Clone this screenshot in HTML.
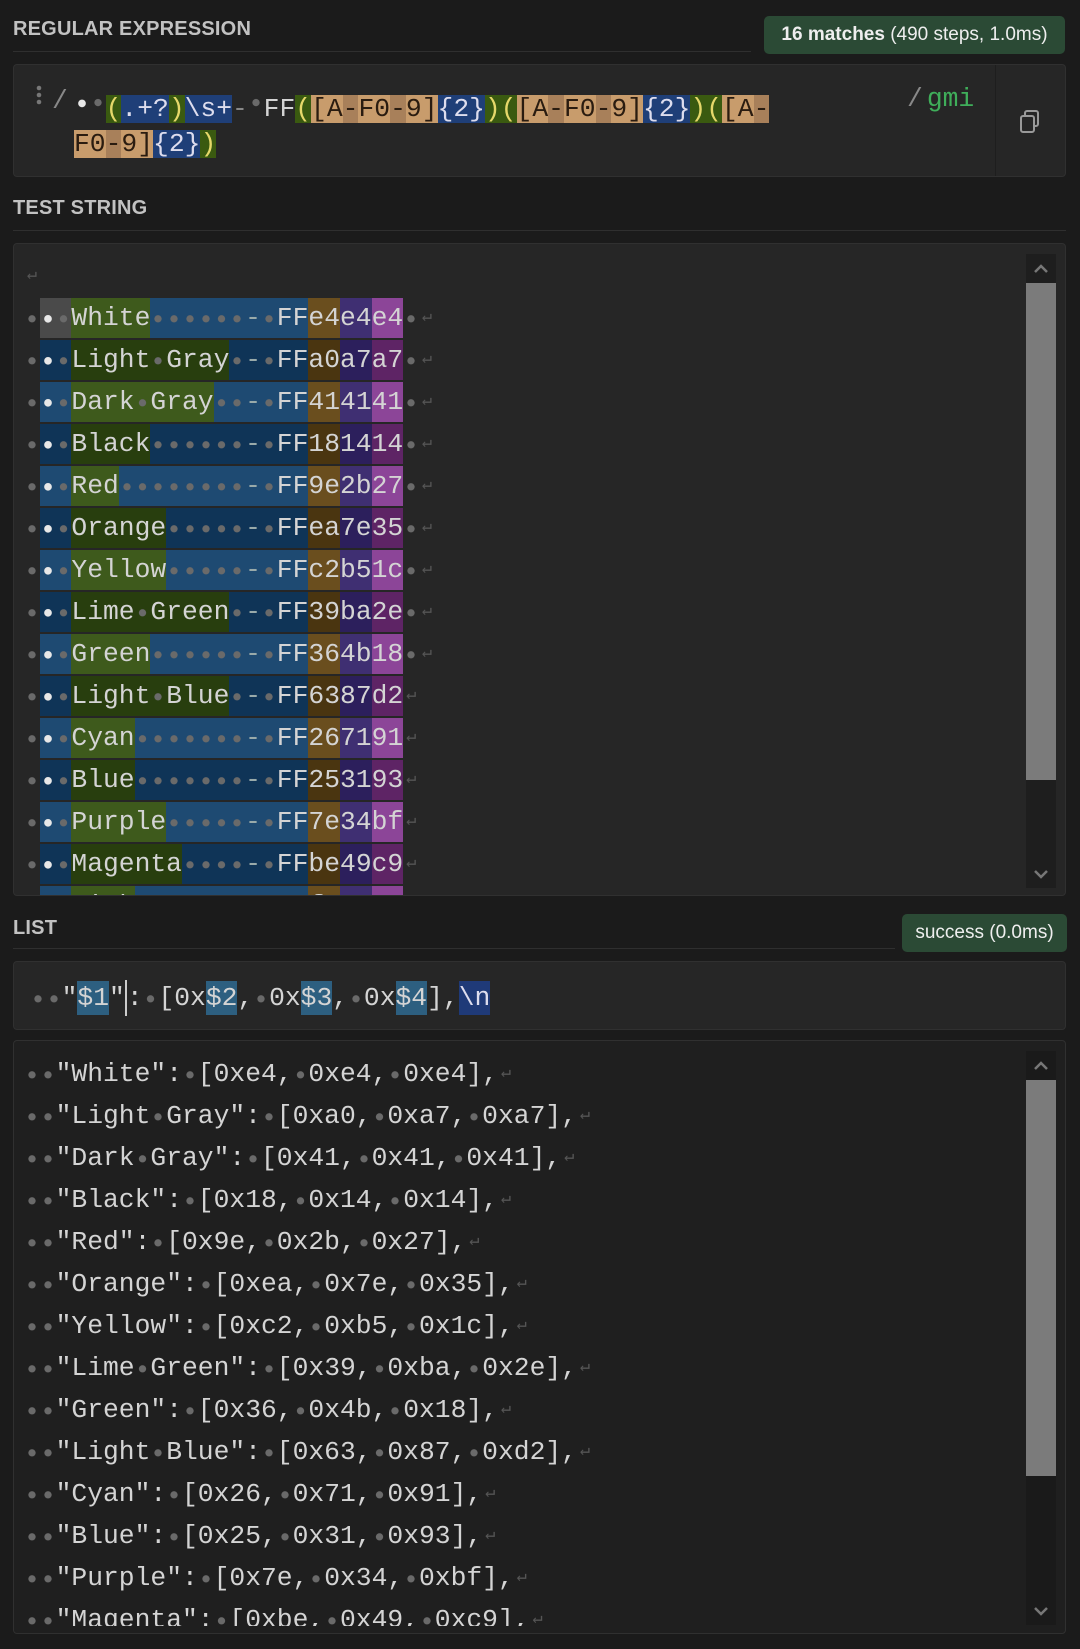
<!DOCTYPE html>
<html><head><meta charset="utf-8"><style>
*{margin:0;padding:0;box-sizing:border-box}
body{width:1080px;height:1649px;background:#1b1b1b;overflow:hidden;position:relative;font-family:"Liberation Sans",sans-serif;color:#d4d4d4}
.hdr{position:absolute;left:13px;font-size:20px;font-weight:bold;color:#c2c2c2;letter-spacing:0.2px}
.line{position:absolute;height:1px;background:#2f2f2f}
.badge{position:absolute;background:#2b4a35;border-radius:5px;color:#eee;font-size:19px;display:flex;align-items:center;justify-content:center}
.box{position:absolute;left:13px;width:1053px;background:#262626;border:1px solid #303030;border-radius:4px;overflow:hidden}
.mono{font-family:"Liberation Mono",monospace;font-size:26.33px}
.r{position:absolute;left:0;height:42px;white-space:nowrap;line-height:40px}
.r>*,.r span>*{display:inline-block;vertical-align:top;height:40px;margin-top:1px}
.r span>*{margin-top:0}
.d{width:15.8px;background:radial-gradient(circle at 50% 52%,#6a6a6a 3.3px,transparent 3.9px)}
.w{width:15.8px;background:radial-gradient(circle at 50% 52%,#e8e8e8 3.5px,transparent 4.1px)}
.n{width:15.8px;color:#555;font-style:normal;font-size:17px;text-align:center}
i{font-style:normal}
.L .m{background:#1e4a72}.D .m{background:#0f3457}
.L .g1{background:#3e5a1c}.D .g1{background:#283e0e}
.L .g2{background:#6a4e1e}.D .g2{background:#4a3510}
.L .g3{background:#3f2f72}.D .g3{background:#2c1f5c}
.L .g4{background:#8c4598}.D .g4{background:#5e2465}
.sel{background:#4a4a4a!important}
.m .h{color:#9aa}
.sb{position:absolute;right:9px;width:30px;background:#1e1e1e}
.sb .up,.sb .dn{position:absolute;left:0;width:30px;height:29px;display:flex;align-items:center;justify-content:center}
.sb .th{position:absolute;left:0;width:30px;background:#7b7b7b}
.rx{position:absolute;white-space:nowrap;line-height:28px;height:28px}
.rx span{display:inline-block;height:28px}
.p{background:#3a5a10;color:#e6d86a}
.b{background:#1f3f78;color:#dde}
.t{background:#c89c6c;color:#2a1c10}
.t2{background:#a8805a;color:#2a1c10}
.rr{position:absolute;left:10px;white-space:nowrap;height:42px;line-height:42px}
.rr>*{display:inline-block;vertical-align:top;height:42px}
</style></head><body>

<div class="hdr" style="top:18px">REGULAR EXPRESSION</div>
<div class="line" style="top:51px;left:13px;width:738px"></div>
<div class="badge" style="left:764px;top:16px;width:301px;height:38px"><span style="font-weight:bold">16 matches</span>&nbsp;(490 steps, 1.0ms)</div>

<div class="box" style="top:64px;height:113px">
  <div style="position:absolute;left:981px;top:0;width:1px;height:113px;background:#1e1e1e"></div>
  <svg style="position:absolute;left:20px;top:20px" width="10" height="22"><circle cx="5" cy="3" r="2.3" fill="#777"/><circle cx="5" cy="10" r="2.3" fill="#777"/><circle cx="5" cy="17" r="2.3" fill="#777"/></svg>
  <div class="mono rx" style="left:38px;top:22px;color:#888">/</div>
  <div class="mono rx" style="left:60px;top:23px"><span class="w" style="width:15.8px;height:28px;background:radial-gradient(circle at 50% 55%,#e8e8e8 3.5px,transparent 4.1px)"></span><span class="d" style="height:28px"></span><span class="p">(</span><span class="b">.+?</span><span class="p">)</span><span class="b">\s+</span><span style="color:#888">-</span><span class="d" style="height:28px"></span><span>FF</span><span class="p">(</span><span class="t">[A</span><span class="t2">-</span><span class="t">F0</span><span class="t2">-</span><span class="t">9]</span><span class="b">{2}</span><span class="p">)(</span><span class="t">[A</span><span class="t2">-</span><span class="t">F0</span><span class="t2">-</span><span class="t">9]</span><span class="b">{2}</span><span class="p">)(</span><span class="t">[A</span><span class="t2">-</span></div>
  <div class="mono rx" style="left:60px;top:65px"><span class="t">F0</span><span class="t2">-</span><span class="t">9]</span><span class="b">{2}</span><span class="p">)</span></div>
  <div class="mono rx" style="left:893px;top:20px"><span style="color:#888">/</span><span style="color:#3fae5a;margin-left:4px">gmi</span></div>
  <svg style="position:absolute;left:1004px;top:44px" width="24" height="26" viewBox="0 0 24 26"><rect x="7" y="2" width="13" height="15" rx="2" fill="none" stroke="#999" stroke-width="2"/><rect x="3" y="7" width="13" height="16" rx="2" fill="#262626" stroke="#999" stroke-width="2"/></svg>
</div>

<div class="hdr" style="top:197px">TEST STRING</div>
<div class="line" style="top:230px;left:13px;width:1053px"></div>

<div class="box mono" style="top:243px;height:653px">
  <div class="sb" style="top:10px;height:634px">
    <div class="up" style="top:0"><svg width="16" height="10"><path d="M2 8 L8 2 L14 8" fill="none" stroke="#777" stroke-width="2.5"/></svg></div>
    <div class="th" style="top:29px;height:497px"></div>
    <div class="dn" style="bottom:0"><svg width="16" height="10"><path d="M2 2 L8 8 L14 2" fill="none" stroke="#777" stroke-width="2.5"/></svg></div>
  </div>
  <div style="position:absolute;left:10px;top:0;width:1000px;height:649px">
    <div class="r" style="top:11px"><i class="n">↵</i></div>
    <div class="r L" style="top:53px"><i class="d"></i><span class="m sel"><i class="w"></i><i class="d"></i></span><span class="g1">White</span><span class="m"><i class="d"></i><i class="d"></i><i class="d"></i><i class="d"></i><i class="d"></i><i class="d"></i><i class="h">-</i><i class="d"></i>FF</span><span class="g2">e4</span><span class="g3">e4</span><span class="g4">e4</span><i class="d"></i><i class="n">↵</i></div>
    <div class="r D" style="top:95px"><i class="d"></i><span class="m"><i class="w"></i><i class="d"></i></span><span class="g1">Light<i class="d"></i>Gray</span><span class="m"><i class="d"></i><i class="h">-</i><i class="d"></i>FF</span><span class="g2">a0</span><span class="g3">a7</span><span class="g4">a7</span><i class="d"></i><i class="n">↵</i></div>
    <div class="r L" style="top:137px"><i class="d"></i><span class="m"><i class="w"></i><i class="d"></i></span><span class="g1">Dark<i class="d"></i>Gray</span><span class="m"><i class="d"></i><i class="d"></i><i class="h">-</i><i class="d"></i>FF</span><span class="g2">41</span><span class="g3">41</span><span class="g4">41</span><i class="d"></i><i class="n">↵</i></div>
    <div class="r D" style="top:179px"><i class="d"></i><span class="m"><i class="w"></i><i class="d"></i></span><span class="g1">Black</span><span class="m"><i class="d"></i><i class="d"></i><i class="d"></i><i class="d"></i><i class="d"></i><i class="d"></i><i class="h">-</i><i class="d"></i>FF</span><span class="g2">18</span><span class="g3">14</span><span class="g4">14</span><i class="d"></i><i class="n">↵</i></div>
    <div class="r L" style="top:221px"><i class="d"></i><span class="m"><i class="w"></i><i class="d"></i></span><span class="g1">Red</span><span class="m"><i class="d"></i><i class="d"></i><i class="d"></i><i class="d"></i><i class="d"></i><i class="d"></i><i class="d"></i><i class="d"></i><i class="h">-</i><i class="d"></i>FF</span><span class="g2">9e</span><span class="g3">2b</span><span class="g4">27</span><i class="d"></i><i class="n">↵</i></div>
    <div class="r D" style="top:263px"><i class="d"></i><span class="m"><i class="w"></i><i class="d"></i></span><span class="g1">Orange</span><span class="m"><i class="d"></i><i class="d"></i><i class="d"></i><i class="d"></i><i class="d"></i><i class="h">-</i><i class="d"></i>FF</span><span class="g2">ea</span><span class="g3">7e</span><span class="g4">35</span><i class="d"></i><i class="n">↵</i></div>
    <div class="r L" style="top:305px"><i class="d"></i><span class="m"><i class="w"></i><i class="d"></i></span><span class="g1">Yellow</span><span class="m"><i class="d"></i><i class="d"></i><i class="d"></i><i class="d"></i><i class="d"></i><i class="h">-</i><i class="d"></i>FF</span><span class="g2">c2</span><span class="g3">b5</span><span class="g4">1c</span><i class="d"></i><i class="n">↵</i></div>
    <div class="r D" style="top:347px"><i class="d"></i><span class="m"><i class="w"></i><i class="d"></i></span><span class="g1">Lime<i class="d"></i>Green</span><span class="m"><i class="d"></i><i class="h">-</i><i class="d"></i>FF</span><span class="g2">39</span><span class="g3">ba</span><span class="g4">2e</span><i class="d"></i><i class="n">↵</i></div>
    <div class="r L" style="top:389px"><i class="d"></i><span class="m"><i class="w"></i><i class="d"></i></span><span class="g1">Green</span><span class="m"><i class="d"></i><i class="d"></i><i class="d"></i><i class="d"></i><i class="d"></i><i class="d"></i><i class="h">-</i><i class="d"></i>FF</span><span class="g2">36</span><span class="g3">4b</span><span class="g4">18</span><i class="d"></i><i class="n">↵</i></div>
    <div class="r D" style="top:431px"><i class="d"></i><span class="m"><i class="w"></i><i class="d"></i></span><span class="g1">Light<i class="d"></i>Blue</span><span class="m"><i class="d"></i><i class="h">-</i><i class="d"></i>FF</span><span class="g2">63</span><span class="g3">87</span><span class="g4">d2</span><i class="n">↵</i></div>
    <div class="r L" style="top:473px"><i class="d"></i><span class="m"><i class="w"></i><i class="d"></i></span><span class="g1">Cyan</span><span class="m"><i class="d"></i><i class="d"></i><i class="d"></i><i class="d"></i><i class="d"></i><i class="d"></i><i class="d"></i><i class="h">-</i><i class="d"></i>FF</span><span class="g2">26</span><span class="g3">71</span><span class="g4">91</span><i class="n">↵</i></div>
    <div class="r D" style="top:515px"><i class="d"></i><span class="m"><i class="w"></i><i class="d"></i></span><span class="g1">Blue</span><span class="m"><i class="d"></i><i class="d"></i><i class="d"></i><i class="d"></i><i class="d"></i><i class="d"></i><i class="d"></i><i class="h">-</i><i class="d"></i>FF</span><span class="g2">25</span><span class="g3">31</span><span class="g4">93</span><i class="n">↵</i></div>
    <div class="r L" style="top:557px"><i class="d"></i><span class="m"><i class="w"></i><i class="d"></i></span><span class="g1">Purple</span><span class="m"><i class="d"></i><i class="d"></i><i class="d"></i><i class="d"></i><i class="d"></i><i class="h">-</i><i class="d"></i>FF</span><span class="g2">7e</span><span class="g3">34</span><span class="g4">bf</span><i class="n">↵</i></div>
    <div class="r D" style="top:599px"><i class="d"></i><span class="m"><i class="w"></i><i class="d"></i></span><span class="g1">Magenta</span><span class="m"><i class="d"></i><i class="d"></i><i class="d"></i><i class="d"></i><i class="h">-</i><i class="d"></i>FF</span><span class="g2">be</span><span class="g3">49</span><span class="g4">c9</span><i class="n">↵</i></div>
    <div class="r L" style="top:641px"><i class="d"></i><span class="m"><i class="w"></i><i class="d"></i></span><span class="g1">Pink</span><span class="m"><i class="d"></i><i class="d"></i><i class="d"></i><i class="d"></i><i class="d"></i><i class="d"></i><i class="d"></i><i class="h">-</i><i class="d"></i>FF</span><span class="g2">f0</span><span class="g3">8a</span><span class="g4">c0</span><i class="n">↵</i></div>
  </div>
</div>

<div class="hdr" style="top:917px">LIST</div>
<div class="line" style="top:948px;left:13px;width:882px"></div>
<div class="badge" style="left:902px;top:914px;width:165px;height:38px">success (0.0ms)</div>

<div class="box mono" style="top:961px;height:69px">
  <div class="rr" style="top:15px;left:16px"><i class="d"></i><i class="d"></i>"<span style="background:#2d5f80;height:34px;margin-top:4px;line-height:34px">$1</span>"<span style="width:2px;background:#ccc;height:36px;margin-top:3px"></span>:<i class="d"></i>[0x<span style="background:#2d5f80;height:34px;margin-top:4px;line-height:34px">$2</span>,<i class="d"></i>0x<span style="background:#2d5f80;height:34px;margin-top:4px;line-height:34px">$3</span>,<i class="d"></i>0x<span style="background:#2d5f80;height:34px;margin-top:4px;line-height:34px">$4</span>],<span style="background:#1f3a78;height:34px;margin-top:4px;line-height:34px;color:#dde">\n</span></div>
</div>

<div class="box mono" style="top:1040px;height:594px;background:#1f1f1f">
  <div class="sb" style="top:10px;height:574px;background:#1a1a1a">
    <div class="up" style="top:0"><svg width="16" height="10"><path d="M2 8 L8 2 L14 8" fill="none" stroke="#777" stroke-width="2.5"/></svg></div>
    <div class="th" style="top:29px;height:396px"></div>
    <div class="dn" style="bottom:0"><svg width="16" height="10"><path d="M2 2 L8 8 L14 2" fill="none" stroke="#777" stroke-width="2.5"/></svg></div>
  </div>
  <div style="position:absolute;left:0;top:0;width:1000px;height:585px;overflow:hidden">
    <div class="rr" style="top:12px"><i class="d"></i><i class="d"></i>"White":<i class="d"></i>[0xe4,<i class="d"></i>0xe4,<i class="d"></i>0xe4],<i class="n">↵</i></div>
    <div class="rr" style="top:54px"><i class="d"></i><i class="d"></i>"Light<i class="d"></i>Gray":<i class="d"></i>[0xa0,<i class="d"></i>0xa7,<i class="d"></i>0xa7],<i class="n">↵</i></div>
    <div class="rr" style="top:96px"><i class="d"></i><i class="d"></i>"Dark<i class="d"></i>Gray":<i class="d"></i>[0x41,<i class="d"></i>0x41,<i class="d"></i>0x41],<i class="n">↵</i></div>
    <div class="rr" style="top:138px"><i class="d"></i><i class="d"></i>"Black":<i class="d"></i>[0x18,<i class="d"></i>0x14,<i class="d"></i>0x14],<i class="n">↵</i></div>
    <div class="rr" style="top:180px"><i class="d"></i><i class="d"></i>"Red":<i class="d"></i>[0x9e,<i class="d"></i>0x2b,<i class="d"></i>0x27],<i class="n">↵</i></div>
    <div class="rr" style="top:222px"><i class="d"></i><i class="d"></i>"Orange":<i class="d"></i>[0xea,<i class="d"></i>0x7e,<i class="d"></i>0x35],<i class="n">↵</i></div>
    <div class="rr" style="top:264px"><i class="d"></i><i class="d"></i>"Yellow":<i class="d"></i>[0xc2,<i class="d"></i>0xb5,<i class="d"></i>0x1c],<i class="n">↵</i></div>
    <div class="rr" style="top:306px"><i class="d"></i><i class="d"></i>"Lime<i class="d"></i>Green":<i class="d"></i>[0x39,<i class="d"></i>0xba,<i class="d"></i>0x2e],<i class="n">↵</i></div>
    <div class="rr" style="top:348px"><i class="d"></i><i class="d"></i>"Green":<i class="d"></i>[0x36,<i class="d"></i>0x4b,<i class="d"></i>0x18],<i class="n">↵</i></div>
    <div class="rr" style="top:390px"><i class="d"></i><i class="d"></i>"Light<i class="d"></i>Blue":<i class="d"></i>[0x63,<i class="d"></i>0x87,<i class="d"></i>0xd2],<i class="n">↵</i></div>
    <div class="rr" style="top:432px"><i class="d"></i><i class="d"></i>"Cyan":<i class="d"></i>[0x26,<i class="d"></i>0x71,<i class="d"></i>0x91],<i class="n">↵</i></div>
    <div class="rr" style="top:474px"><i class="d"></i><i class="d"></i>"Blue":<i class="d"></i>[0x25,<i class="d"></i>0x31,<i class="d"></i>0x93],<i class="n">↵</i></div>
    <div class="rr" style="top:516px"><i class="d"></i><i class="d"></i>"Purple":<i class="d"></i>[0x7e,<i class="d"></i>0x34,<i class="d"></i>0xbf],<i class="n">↵</i></div>
    <div class="rr" style="top:558px"><i class="d"></i><i class="d"></i>"Magenta":<i class="d"></i>[0xbe,<i class="d"></i>0x49,<i class="d"></i>0xc9],<i class="n">↵</i></div>
  </div>
</div>
</body></html>
